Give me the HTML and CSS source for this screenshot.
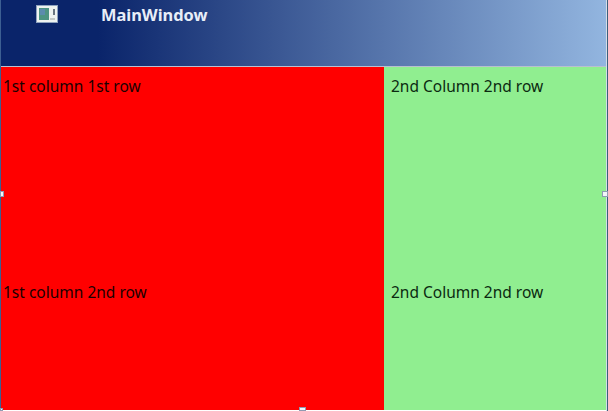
FILE: index.html
```html
<!DOCTYPE html>
<html lang="en">
<head>
    <meta charset="UTF-8">
    <meta name="viewport" content="width=device-width, initial-scale=1.0">
    <title>MainWindow</title>
    <link rel="stylesheet" href="styles.css">
</head>
<body>
    <div class="window">
        <div class="titlebar">
            <svg class="app-icon" width="22" height="18" viewBox="0 0 22 18">
                <rect width="22" height="18" fill="#8fa3bf"/>
                <rect x="1" y="1" width="20" height="16" fill="#eef2f0"/>
                <rect x="3" y="3" width="10" height="12" fill="#4d9482"/>
                <rect x="4" y="4" width="5" height="6" fill="#5b8cad"/>
                <rect x="17" y="4" width="2" height="6" fill="#6a7580"/>
                <rect x="14" y="13" width="5" height="2" fill="#c3c9c6"/>
            </svg>
            <span class="title">MainWindow</span>
        </div>
        <div class="grid">
            <div class="cell red">1st column 1st row</div>
            <div class="cell green">2nd Column 2nd row</div>
            <div class="cell red">1st column 2nd row</div>
            <div class="cell green">2nd Column 2nd row</div>
        </div>
        <span class="handle handle-left"></span>
        <span class="handle handle-right"></span>
        <span class="handle handle-bottom"></span>
        <span class="handle handle-corner"></span>
    </div>
</body>
</html>
```

FILE: styles.css
```css
* {
    margin: 0;
    padding: 0;
    box-sizing: border-box;
}

html, body {
    width: 608px;
    height: 411px;
    overflow: hidden;
}

body {
    font-family: "Noto Sans", "DejaVu Sans", sans-serif;
    background: #3c5f7c;
}

.window {
    position: relative;
    width: 607px;
    height: 411px;
    display: flex;
    flex-direction: column;
    background: #fff;
    border-left: 1px solid #3d5f92;
    border-right: 1px solid #d5dde8;
}

.titlebar {
    height: 67px;
    display: flex;
    align-items: flex-start;
    border-bottom: 1px solid #b9bfd0;
    background: linear-gradient(to right, #0a246a 0%, #0a246a 16%, #a6caf0 112%);
}

.app-icon {
    margin: 5px 0 0 35px;
}

.title {
    margin: 5px 0 0 43px;
    font-size: 16.4px;
    font-weight: 700;
    line-height: 20px;
    color: #e8eef8;
}

.grid {
    flex: 1;
    display: grid;
    grid-template-columns: 383px 1fr;
    grid-template-rows: 206px 137px;
    border-bottom: 1px solid #fff;
}

.cell {
    font-size: 15.5px;
    line-height: 20px;
    padding: 9px 0 0 2px;
    color: #1a0000;
}

.red {
    background: #ff0000;
}

.green {
    background: #90ee90;
    padding-left: 7px;
    color: #0b2a10;
}

.handle {
    position: absolute;
    background: #f2f5fa;
    border: 1px solid #8f9bb3;
}

.handle-left {
    left: -1px;
    top: 191px;
    width: 4px;
    height: 6px;
}

.handle-right {
    right: -2px;
    top: 191px;
    width: 6px;
    height: 6px;
}

.handle-bottom {
    left: 298px;
    bottom: 0;
    width: 7px;
    height: 4px;
}

.handle-corner {
    left: -1px;
    bottom: 0;
    width: 3px;
    height: 3px;
}
```
